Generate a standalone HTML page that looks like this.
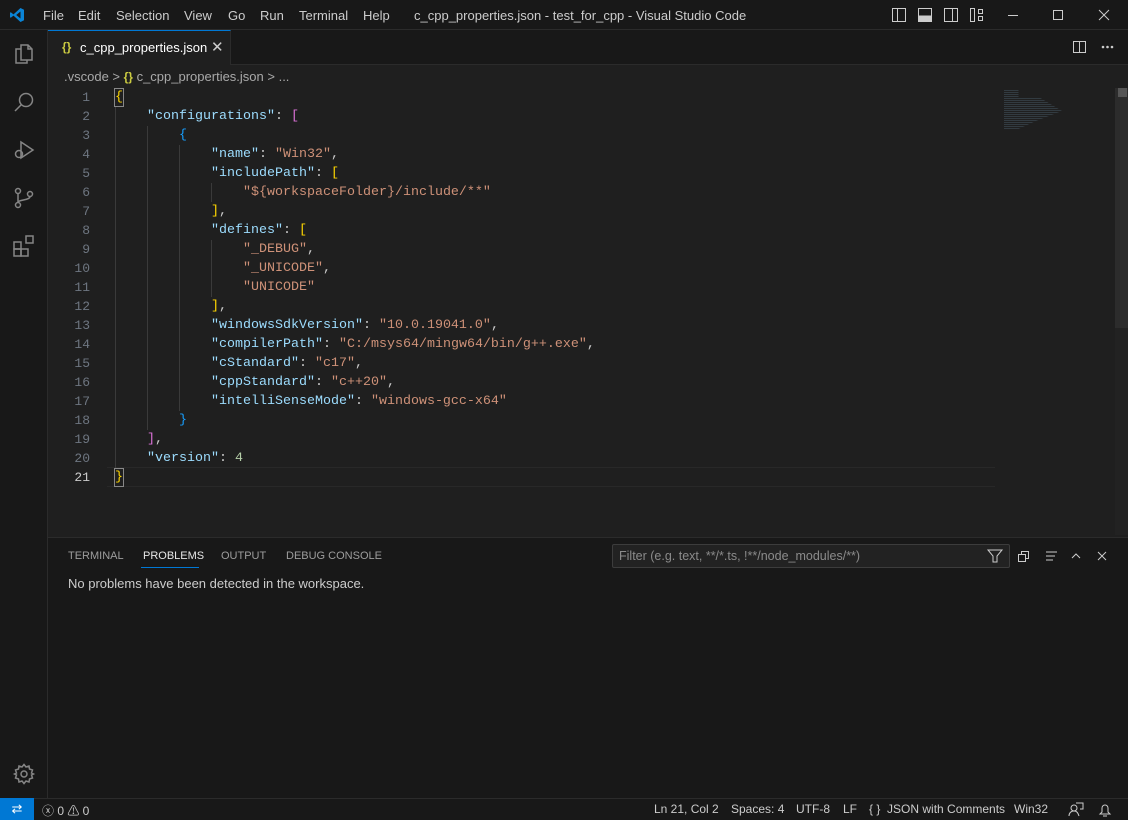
<!DOCTYPE html>
<html><head><meta charset="utf-8"><style>
*{margin:0;padding:0;box-sizing:border-box}
body{width:1128px;height:820px;background:#1f1f1f;font-family:"Liberation Sans",sans-serif;color:#ccc;position:relative;overflow:hidden;font-size:13px}
.abs{position:absolute}
#title{left:0;top:0;width:1128px;height:30px;background:#181818;border-bottom:1px solid #2b2b2b}
#title .m{top:8px;font-size:13px;color:#ccc}
#act{left:0;top:30px;width:48px;height:768px;background:#181818;border-right:1px solid #2b2b2b}
#tabs{left:48px;top:30px;width:1080px;height:35px;background:#181818;border-bottom:1px solid #2b2b2b}
#tab{left:48px;top:30px;width:183px;height:35px;background:#1f1f1f;border-top:1px solid #0078d4;border-right:1px solid #2b2b2b}
.code{font-family:"Liberation Mono",monospace;font-size:13.33px;line-height:19px;white-space:pre}
#ln{left:48px;top:88px;width:42px;text-align:right;color:#6e7681;font-size:13px}
#src{left:115px;top:88px;color:#ccc}
.k{color:#9cdcfe}.s{color:#ce9178}.n{color:#b5cea8}.y{color:#ffd700}.p{color:#da70d6}.b{color:#179fff}
#panel{left:48px;top:537px;width:1080px;height:261px;background:#181818;border-top:1px solid #2b2b2b}
#status{left:0;top:798px;width:1128px;height:22px;background:#181818;border-top:1px solid #2b2b2b;font-size:12px}
.ptab{top:12px;font-size:11px;color:#9d9d9d}
.guide{width:1px;background:#3a3a3a}
</style></head><body>
<div id="title" class="abs">
<svg class="abs" style="left:9px;top:7px" width="16" height="16" viewBox="0 0 16 16"><path d="M11.5 1 L15 2.7 V13.3 L11.5 15 L4.5 8.6 L1.8 10.7 L1 10.2 V5.8 L1.8 5.3 L4.5 7.4 Z M11.5 4.5 L7.2 8 L11.5 11.5Z" fill="#0a84d6"/></svg>
<span class="abs m" style="left:43px">File</span><span class="abs m" style="left:78px">Edit</span><span class="abs m" style="left:116px">Selection</span><span class="abs m" style="left:184px">View</span><span class="abs m" style="left:228px">Go</span><span class="abs m" style="left:260px">Run</span><span class="abs m" style="left:299px">Terminal</span><span class="abs m" style="left:363px">Help</span>
<span class="abs m" style="left:414px">c_cpp_properties.json - test_for_cpp - Visual Studio Code</span>
<svg class="abs" style="left:890px;top:7px" width="230" height="16"><g fill="none" stroke="#ccc"><rect x="2.5" y="1.5" width="13" height="13"/><line x1="7.5" y1="1.5" x2="7.5" y2="14.5"/><rect x="28.5" y="1.5" width="13" height="13"/><rect x="29" y="9" width="12" height="5" fill="#ccc"/><rect x="54.5" y="1.5" width="13" height="13"/><line x1="62.5" y1="1.5" x2="62.5" y2="14.5"/><rect x="80.5" y="1.5" width="4" height="13"/><rect x="88.5" y="2.5" width="4" height="4"/><rect x="88.5" y="9.5" width="4" height="4"/><line x1="118" y1="8.5" x2="128" y2="8.5"/><rect x="163.5" y="3.5" width="9" height="9"/><path d="M209 3 L219 13 M219 3 L209 13"/></g></svg>
</div>
<div id="act" class="abs">
<svg class="abs" style="left:12px;top:12px" width="24" height="24" fill="none" stroke="#858585" stroke-width="1.5"><path d="M9 3h7l4 4v11H9z M16 3v4h4 M9 7H4v14h11v-3"/></svg>
<svg class="abs" style="left:12px;top:60px" width="24" height="24" fill="none" stroke="#858585" stroke-width="1.5"><circle cx="14" cy="10" r="6.5"/><path d="M9.5 14.5 L3 21"/></svg>
<svg class="abs" style="left:12px;top:108px" width="24" height="24" fill="none" stroke="#858585" stroke-width="1.5"><path d="M9 4 L21 12 L9 20z"/><circle cx="7" cy="16" r="3.5"/></svg>
<svg class="abs" style="left:12px;top:156px" width="24" height="24" fill="none" stroke="#858585" stroke-width="1.5"><circle cx="6" cy="5" r="2.5"/><circle cx="6" cy="19" r="2.5"/><circle cx="18" cy="8" r="2.5"/><path d="M6 7.5v9 M18 10.5c0 4-12 3-12 6"/></svg>
<svg class="abs" style="left:12px;top:204px" width="24" height="24" fill="none" stroke="#858585" stroke-width="1.5"><rect x="2" y="8" width="7" height="7"/><rect x="2" y="15" width="7" height="7"/><rect x="9" y="15" width="7" height="7"/><rect x="14" y="2" width="7" height="7"/></svg>
<svg class="abs" style="left:12px;top:732px" width="24" height="24" fill="none" stroke="#858585" stroke-width="1.5"><circle cx="12" cy="12" r="3"/><path d="M12 2.5l2 2.5 3-1 .5 3 3 1-1 3 2 1-2 1 1 3-3 1-.5 3-3-1-2 2.5-2-2.5-3 1-.5-3-3-1 1-3-2-1 2-1-1-3 3-1 .5-3 3 1z"/></svg>
</div>
<div id="tabs" class="abs"></div>
<div id="tab" class="abs">
<span class="abs" style="left:14px;top:9px;color:#cbcb41;font-size:12px;font-weight:bold">{}</span>
<span class="abs" style="left:32px;top:9px;color:#fff;font-size:13px">c_cpp_properties.json</span>
<span class="abs" style="left:163px;top:7px;color:#ccc;font-size:15px">✕</span>
</div>
<svg class="abs" style="left:1071px;top:39px" width="50" height="16" fill="none" stroke="#ccc"><rect x="2.5" y="2.5" width="12" height="11"/><line x1="8.5" y1="2.5" x2="8.5" y2="13.5"/><circle cx="32" cy="8" r=".8" fill="#ccc"/><circle cx="36.5" cy="8" r=".8" fill="#ccc"/><circle cx="41" cy="8" r=".8" fill="#ccc"/></svg>
<div class="abs" style="left:64px;top:69px;font-size:13px;color:#a9a9a9">.vscode &gt; <span style="color:#cbcb41;font-weight:bold;font-size:12px">{}</span> c_cpp_properties.json &gt; ...</div>
<div id="ln" class="abs code">1
2
3
4
5
6
7
8
9
10
11
12
13
14
15
16
17
18
19
20
<span style="color:#ccc">21</span></div>
<div class="abs" style="left:107px;top:467px;width:888px;height:20px;border:1px solid #282828;border-left:none;border-right:none"></div>
<div class="abs guide" style="left:115px;top:107px;height:361px"></div>
<div class="abs guide" style="left:147px;top:126px;height:304px"></div>
<div class="abs guide" style="left:179px;top:145px;height:266px"></div>
<div class="abs guide" style="left:211px;top:183px;height:19px"></div>
<div class="abs guide" style="left:211px;top:240px;height:57px"></div>
<div class="abs" style="left:114px;top:88px;width:10px;height:19px;border:1px solid #888"></div>
<div class="abs" style="left:114px;top:468px;width:10px;height:19px;border:1px solid #888"></div>
<div id="src" class="abs code"><span class="y">{</span>
    <span class="k">"configurations"</span>: <span class="p">[</span>
        <span class="b">{</span>
            <span class="k">"name"</span>: <span class="s">"Win32"</span>,
            <span class="k">"includePath"</span>: <span class="y">[</span>
                <span class="s">"${workspaceFolder}/include/**"</span>
            <span class="y">]</span>,
            <span class="k">"defines"</span>: <span class="y">[</span>
                <span class="s">"_DEBUG"</span>,
                <span class="s">"_UNICODE"</span>,
                <span class="s">"UNICODE"</span>
            <span class="y">]</span>,
            <span class="k">"windowsSdkVersion"</span>: <span class="s">"10.0.19041.0"</span>,
            <span class="k">"compilerPath"</span>: <span class="s">"C:/msys64/mingw64/bin/g++.exe"</span>,
            <span class="k">"cStandard"</span>: <span class="s">"c17"</span>,
            <span class="k">"cppStandard"</span>: <span class="s">"c++20"</span>,
            <span class="k">"intelliSenseMode"</span>: <span class="s">"windows-gcc-x64"</span>
        <span class="b">}</span>
    <span class="p">]</span>,
    <span class="k">"version"</span>: <span class="n">4</span>
<span class="y">}</span></div>
<div class="abs" style="left:1004px;top:89px;width:58px;height:40px;background:repeating-linear-gradient(#1f1f1f 0 1px,#4a5d6a 1px 2px);opacity:.45;clip-path:polygon(0 0,25% 0,25% 20%,60% 20%,100% 55%,55% 80%,25% 100%,0 100%)"></div>
<div class="abs" style="left:1115px;top:88px;width:13px;height:447px;background:#222"></div>
<div class="abs" style="left:1115px;top:88px;width:13px;height:240px;background:#2c2c2c"></div>
<div class="abs" style="left:1118px;top:88px;width:9px;height:9px;background:#555"></div>
<div id="panel" class="abs">
<span class="abs ptab" style="left:20px;top:12px">TERMINAL</span>
<span class="abs ptab" style="left:95px;top:12px;color:#e7e7e7">PROBLEMS</span>
<div class="abs" style="left:93px;top:29px;width:58px;height:1px;background:#0078d4"></div>
<span class="abs ptab" style="left:173px">OUTPUT</span>
<span class="abs ptab" style="left:238px">DEBUG CONSOLE</span>
<div class="abs" style="left:20px;top:38px;font-size:13px;color:#ccc">No problems have been detected in the workspace.</div>
<div class="abs" style="left:564px;top:6px;width:398px;height:24px;background:#222;border:1px solid #3c3c3c;border-radius:2px;font-size:12.5px;color:#8b8b8b;padding:4px 6px">Filter (e.g. text, **/*.ts, !**/node_modules/**)</div>
<svg class="abs" style="left:938px;top:10px" width="130" height="16" fill="none" stroke="#ccc"><path d="M2 2h14l-5 6v6h-4v-6z"/><rect x="32.5" y="6.5" width="7" height="7"/><path d="M35.5 6.5v-3h7v7h-3"/><path d="M60 4h11 M60 8h9 M60 12h7"/><path d="M86 10l4-4 4 4"/><path d="M112 4l8 8 M120 4l-8 8"/></svg>
</div>
<div id="status" class="abs">
<div class="abs" style="left:0;top:-1px;width:34px;height:22px;background:#0078d4;color:#fff;text-align:center;font-size:13px;line-height:22px">⇄</div>
<span class="abs" style="left:42px;top:3px;color:#ccc">ⓧ 0 ⚠ 0</span>
<span class="abs" style="left:654px;top:3px">Ln 21, Col 2</span>
<span class="abs" style="left:731px;top:3px">Spaces: 4</span>
<span class="abs" style="left:796px;top:3px">UTF-8</span>
<span class="abs" style="left:843px;top:3px">LF</span>
<span class="abs" style="left:869px;top:3px">{ }&nbsp; JSON with Comments</span>
<span class="abs" style="left:1014px;top:3px">Win32</span>
<svg class="abs" style="left:1068px;top:3px" width="50" height="16" fill="none" stroke="#ccc"><circle cx="6" cy="6" r="3"/><path d="M1 14c0-3 2-5 5-5s4 2 5 5 M8 1h7v6h-3"/><path d="M32 12h10l-2-2V6a3 3 0 0 0-6 0v4zM35 14h4"/></svg>
</div>
</body></html>
